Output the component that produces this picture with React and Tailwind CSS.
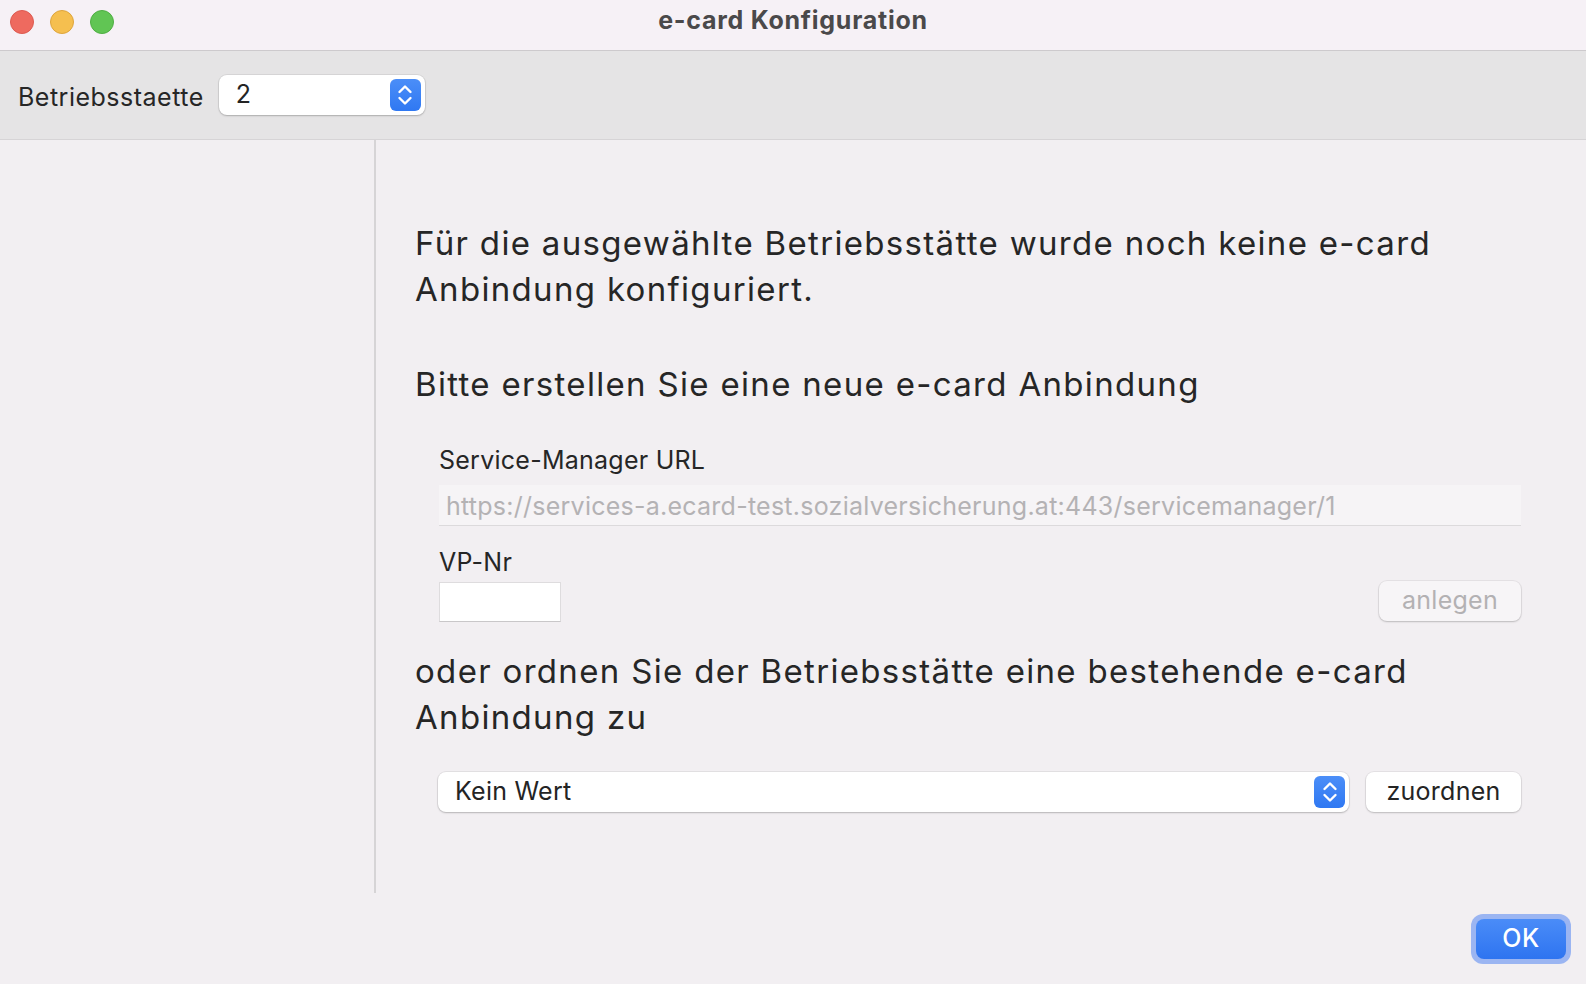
import React from "react";

const font = { fontFamily: "Inter, 'Noto Sans', sans-serif" };

// blue up/down stepper used by the popup selects
const Stepper = () => (
  <div className="flex h-[32px] w-[31px] items-center justify-center rounded-[6px] bg-gradient-to-b from-[#4b8ef8] to-[#2f78f2]">
    <svg width="16" height="24" viewBox="0 0 16 24" fill="none">
      <path d="M2.5 9 L8 3.5 L13.5 9" stroke="white" strokeWidth="2.4" strokeLinecap="round" strokeLinejoin="round" />
      <path d="M2.5 15 L8 20.5 L13.5 15" stroke="white" strokeWidth="2.4" strokeLinecap="round" strokeLinejoin="round" />
    </svg>
  </div>
);

const PopupSelect = ({ value, className }) => (
  <div
    className={`flex h-[40px] items-center justify-between rounded-[8px] bg-white pl-[17px] pr-[4px] shadow-[0_0_0_1px_rgba(0,0,0,0.06),0_1px_2px_rgba(0,0,0,0.2)] ${className}`}
  >
    <span className="text-[25px] tracking-[0.01em] text-[#242424]">{value}</span>
    <Stepper />
  </div>
);

const PushButton = ({ children, disabled }) => (
  <button
    className={`flex h-[40px] items-center justify-center rounded-[8px] text-[25px] tracking-[0.01em] shadow-[0_0_0_1px_rgba(0,0,0,0.05),0_1px_2px_rgba(0,0,0,0.18)] ${
      disabled ? "w-[142px] bg-[#f7f5f7] text-[#b3b1b3]" : "w-[155px] bg-white text-[#242424]"
    }`}
  >
    {children}
  </button>
);

export default function App() {
  return (
    <div className="flex h-[984px] w-[1586px] flex-col overflow-hidden bg-[#f2eff2] text-[#262626]" style={font}>
      {/* title bar */}
      <div className="relative flex h-[51px] shrink-0 items-center justify-center border-b border-[#cdcacd] bg-[#f6f1f6] pb-[8px]">
        <div className="absolute left-[10px] top-[10px] flex gap-[16px]">
          <span className="h-[24px] w-[24px] rounded-full border border-[#dd5a50] bg-[#ee6a5f]" />
          <span className="h-[24px] w-[24px] rounded-full border border-[#dea53c] bg-[#f5bf4f]" />
          <span className="h-[24px] w-[24px] rounded-full border border-[#4fae43] bg-[#61c554]" />
        </div>
        <span className="text-[25px] font-bold tracking-[0.03em] text-[#4a494a]">e-card Konfiguration</span>
      </div>

      {/* toolbar */}
      <div className="flex h-[89px] shrink-0 items-center gap-[15px] border-b border-[#d6d4d6] bg-[#e5e4e5] pl-[18px]">
        <span className="pt-[6px] text-[25px] tracking-[0.02em] text-[#262626]">Betriebsstaette</span>
        <PopupSelect value="2" className="w-[206px]" />
      </div>

      <div className="flex h-[753px] shrink-0">
        <div className="w-[376px] shrink-0 border-r-2 border-[#d6d4d6]" />

        <div className="flex-1 pl-[39px] pr-[65px] pt-[80px]">
          <p className="text-[33px] leading-[46px] tracking-[0.04em] text-[#262626]">
            Für die ausgewählte Betriebsstätte wurde noch keine e-card
            <br />
            Anbindung konfiguriert.
          </p>
          <p className="mt-[49px] text-[33px] leading-[46px] tracking-[0.04em] text-[#262626]">
            Bitte erstellen Sie eine neue e-card Anbindung
          </p>

          <div className="ml-[24px] mt-[37px]">
            <div className="text-[25px] leading-[32px] tracking-[0.01em]">Service-Manager URL</div>
            <div className="mt-[9px] flex h-[41px] items-center border-b border-[#dcdadc] bg-[#f6f4f6] pl-[7px] pt-[4px] text-[25px] tracking-[0.01em] text-[#b4b2b4]">
              https://services-a.ecard-test.sozialversicherung.at:443/servicemanager/1
            </div>

            <div className="mt-[20px] text-[25px] leading-[32px] tracking-[0.01em]">VP-Nr</div>
            <div className="mt-[4px] flex items-center">
              <div className="h-[40px] w-[122px] border border-[#dedcde] border-b-[#c9c7c9] bg-white" />
              <div className="ml-auto -mt-[2px]">
                <PushButton disabled>anlegen</PushButton>
              </div>
            </div>
          </div>

          <p className="mt-[26px] text-[33px] leading-[46px] tracking-[0.04em] text-[#262626]">
            oder ordnen Sie der Betriebsstätte eine bestehende e-card
            <br />
            Anbindung zu
          </p>

          <div className="ml-[23px] mt-[32px] flex gap-[17px]">
            <PopupSelect value="Kein Wert" className="flex-1" />
            <PushButton>zuordnen</PushButton>
          </div>
        </div>
      </div>

      {/* dialog footer */}
      <div className="flex flex-1 items-start justify-end pr-[15px] pt-[21px]">
        <div className="rounded-[12px] bg-[#9bb5f2] p-[5px]">
          <button className="flex h-[40px] w-[90px] items-center justify-center rounded-[8px] bg-gradient-to-b from-[#4a8cf8] to-[#2e74f0] text-[25px] font-medium tracking-[0.02em] text-white">
            OK
          </button>
        </div>
      </div>
    </div>
  );
}
